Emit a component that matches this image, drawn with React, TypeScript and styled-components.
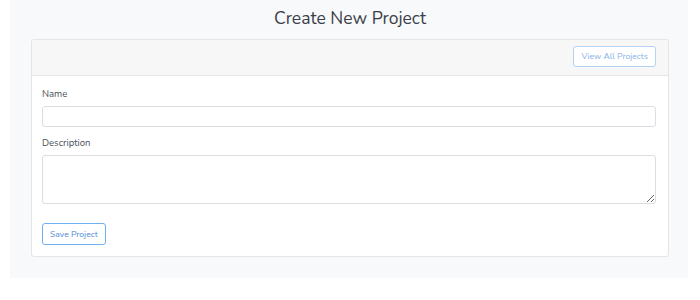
import React from 'react';
import styled, { createGlobalStyle } from 'styled-components';

const GlobalStyle = createGlobalStyle`
  html, body {
    margin: 0;
    padding: 0;
    background: #ffffff;
    font-family: "Nunito", "Lato", "Open Sans", sans-serif;
  }
`;

const Page = styled.div`
  margin-left: 10px;
  width: 678px;
  height: 278px;
  box-sizing: border-box;
  background: #f8f9fb;
  padding: 0 19px 0 21px;
`;

const Title = styled.h1`
  margin: 0;
  height: 39px;
  padding-top: 8px;
  box-sizing: border-box;
  text-align: center;
  font-size: 17.5px;
  font-weight: 400;
  line-height: 20px;
  color: #3b4048;
`;

const Card = styled.div`
  background: #ffffff;
  border: 1px solid #e3e5e8;
  border-radius: 3px;
`;

const CardHeader = styled.div`
  display: flex;
  justify-content: flex-end;
  height: 36px;
  box-sizing: border-box;
  padding: 6px 12px 0 10px;
  background: #f7f7f7;
  border-bottom: 1px solid #e3e5e8;
`;

const CardBody = styled.div`
  padding: 12px 12px 11px 10px;
`;

const Label = styled.label`
  display: block;
  font-size: 9.5px;
  line-height: 12px;
  color: #4a4f57;
  margin-bottom: 6px;
`;

const Field = styled.div<{ $gap: number }>`
  margin-bottom: ${(p) => p.$gap}px;
`;

const Input = styled.input`
  display: block;
  width: 100%;
  height: 21px;
  box-sizing: border-box;
  border: 1px solid #dadde1;
  border-radius: 3px;
  background: #fff;
  outline: none;
`;

const TextArea = styled.textarea`
  display: block;
  width: 100%;
  height: 49px;
  box-sizing: border-box;
  border: 1px solid #dadde1;
  border-radius: 3px;
  background: #fff;
  outline: none;
  resize: vertical;
`;

const OutlineButton = styled.button<{ $faded?: boolean }>`
  display: block;
  height: ${(p) => (p.$faded ? 21 : 22)}px;
  padding: 0 7px;
  font-family: inherit;
  font-size: 8.6px;
  line-height: 1;
  color: ${(p) => (p.$faded ? '#86b2e8' : '#4f8ad8')};
  background: #fff;
  border: 1px solid ${(p) => (p.$faded ? '#b3d3f5' : '#6fb0f2')};
  border-radius: 3px;
  cursor: pointer;
`;

const App: React.FC = () => {
  return (
    <>
      <GlobalStyle />
      <Page>
        <Title>Create New Project</Title>
        <Card>
          <CardHeader>
            <OutlineButton $faded>View All Projects</OutlineButton>
          </CardHeader>
          <CardBody>
            <Field $gap={10}>
              <Label htmlFor="name">Name</Label>
              <Input id="name" type="text" />
            </Field>
            <Field $gap={19}>
              <Label htmlFor="description">Description</Label>
              <TextArea id="description" />
            </Field>
            <OutlineButton>Save Project</OutlineButton>
          </CardBody>
        </Card>
      </Page>
    </>
  );
};

export default App;
